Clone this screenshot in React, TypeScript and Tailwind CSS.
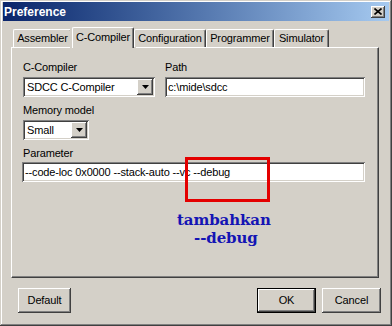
import { ReactNode } from 'react';

const raised = "shadow-[inset_-1px_-1px_#404040,inset_1px_1px_#ffffff,inset_-2px_-2px_#808080,inset_2px_2px_#d4d0c8]";
const sunken = "shadow-[inset_1px_1px_#808080,inset_-1px_-1px_#ffffff,inset_2px_2px_#404040,inset_-2px_-2px_#d4d0c8]";

const tabs = [
  { name: "Assembler", w: "w-[59px]" },
  { name: "C-Compiler", w: "w-[66px]", active: true },
  { name: "Configuration", w: "w-[72px]" },
  { name: "Programmer", w: "w-[68px]" },
  { name: "Simulator", w: "w-[55px]" },
];

const Arrow = () => (
  <div className={`${raised} bg-[#d4d0c8] w-[16px] h-[16px] flex items-center justify-center`}>
    <svg width="7" height="4" viewBox="0 0 7 4"><path d="M0 0h7L3.5 4z" fill="#000" /></svg>
  </div>
);

const Combo = ({ value, className }: { value: string, className: string }) => (
  <div className={`${sunken} ${className} bg-white h-[20px] flex items-center justify-between pl-[4px] pr-[2px]`}>
    <span>{value}</span>
    <Arrow />
  </div>
);

const Field = ({ value, className }: { value: string, className: string }) => (
  <div className={`${sunken} ${className} bg-white h-[20px] flex items-center pl-[3px]`}>
    {value}
  </div>
);

const Label = ({ children }: { children: ReactNode }) => (
  <div className="h-[13px] leading-[13px]">{children}</div>
);

const Button = ({ label, def = false, className = "" }: { label: string, def?: boolean, className?: string }) => (
  <div className={`${className} ${def ? "border border-black" : ""} h-[25px]`}>
    <div className={`${raised} h-full flex items-center justify-center bg-[#d4d0c8]`}>{label}</div>
  </div>
);

export default function App() {
  return (
    <div className="w-[392px] h-[326px] bg-[#d4d0c8] px-[3px] pt-[2px] flex flex-col text-[11px] tracking-[-0.15px] text-black font-['Liberation_Sans',Arial,sans-serif] shadow-[inset_-1px_-1px_#404040,inset_1px_1px_#d4d0c8,inset_-2px_-2px_#808080,inset_2px_2px_#ffffff]">
      <div className="h-[19px] flex items-center justify-between pl-[1px] pr-[4px] bg-gradient-to-r from-[#0a246a] to-[#a6caf0]">
        <span className="text-white font-bold text-[12px] tracking-normal">Preference</span>
        <div className={`${raised} bg-[#d4d0c8] w-[14px] h-[12px] flex items-center justify-center`}>
          <svg width="8" height="7" viewBox="0 0 8 7">
            <path d="M0.5 0.5L7.5 6.5M7.5 0.5L0.5 6.5" stroke="#000" strokeWidth="1.6" />
          </svg>
        </div>
      </div>

      <div className="mt-[6px] ml-[8px] mr-[10px] flex flex-col">
        <div className="flex items-end h-[21px] pl-[2px] relative z-10">
          {tabs.map(tab => (
            <div key={tab.name}
              className={`${tab.w} ${tab.active ? "h-[21px] -mx-[2px] px-[2px] bg-[#d4d0c8]" : "h-[18px] mb-px"} flex`}>
              <div className={`flex-1 flex items-center justify-center border-l border-t border-white rounded-tl-[2px] rounded-tr-[2px] border-r border-r-[#404040] shadow-[inset_-1px_0_#808080] bg-[#d4d0c8] ${tab.active ? "pb-[2px]" : ""}`}>
                {tab.name}
              </div>
            </div>
          ))}
        </div>

        <div className="relative -mt-px h-[231px] border border-t-white border-l-white border-r-[#404040] border-b-[#404040] shadow-[inset_-1px_-1px_#808080] pl-[11px] pt-[13px]">
          <div className="flex gap-[10px]">
            <div className="flex flex-col gap-[3px]">
              <Label>C-Compiler</Label>
              <Combo value="SDCC C-Compiler" className="w-[132px]" />
            </div>
            <div className="flex flex-col gap-[3px]">
              <Label>Path</Label>
              <Field value="c:\mide\sdcc" className="w-[200px]" />
            </div>
          </div>
          <div className="flex flex-col gap-[3px] mt-[7px]">
            <Label>Memory model</Label>
            <Combo value="Small" className="w-[66px]" />
          </div>
          <div className="flex flex-col gap-[2px] mt-[7px]">
            <Label>Parameter</Label>
            <Field value="--code-loc 0x0000 --stack-auto --vc --debug" className="w-[343px] -ml-px" />
          </div>

          <div className="absolute left-[173px] top-[109px] w-[85px] h-[45px] border-[3px] border-[#e40000]" />

          <div className="ml-[154px] mt-[29px] flex flex-col text-[15px] leading-[18px] tracking-[-0.1px] font-bold text-[#1414b4] font-['DejaVu_Serif',serif]">
            <span>tambahkan</span>
            <span className="ml-[17px]">--debug</span>
          </div>
        </div>
      </div>

      <div className="flex mt-[10px] pl-[15px] pr-[8px]">
        <Button label="Default" className="w-[53px]" />
        <div className="flex-1" />
        <Button label="OK" def className="w-[59px]" />
        <Button label="Cancel" className="w-[59px] ml-[6px]" />
      </div>
    </div>
  );
}
